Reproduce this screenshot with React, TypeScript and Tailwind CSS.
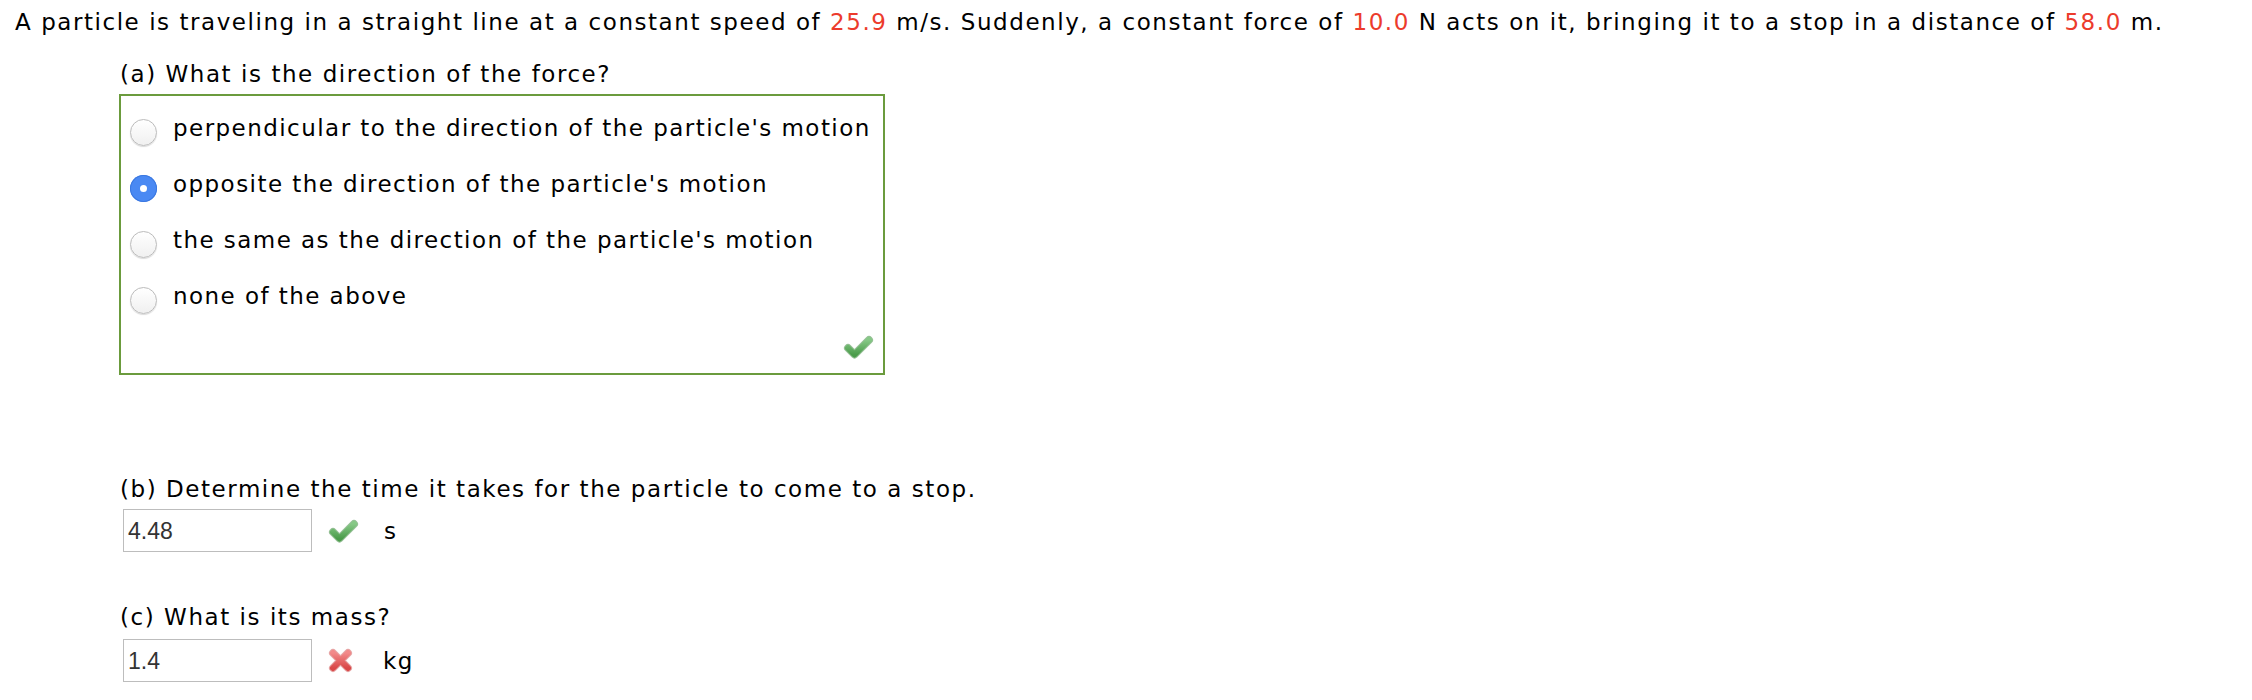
import React from "react";

const FONT = "font-['DejaVu_Sans',Verdana,sans-serif]";

function Check() {
  return (
    <svg width="31" height="26" viewBox="0 0 31 26">
      <defs>
        <linearGradient id="chk" x1="0" y1="0" x2="0" y2="1">
          <stop offset="0" stopColor="#86c886" />
          <stop offset="1" stopColor="#4b9c4b" />
        </linearGradient>
      </defs>
      <polyline
        points="5,14 11.5,20.5 26,6"
        fill="none"
        stroke="#3f8c3f"
        strokeWidth="8"
        strokeLinecap="round"
        strokeLinejoin="round"
        opacity="0.55"
      />
      <polyline
        points="5,14 11.5,20.5 26,6"
        fill="none"
        stroke="url(#chk)"
        strokeWidth="6"
        strokeLinecap="round"
        strokeLinejoin="round"
      />
    </svg>
  );
}

function Cross() {
  return (
    <svg width="25" height="25" viewBox="0 0 25 25">
      <defs>
        <linearGradient id="crs" x1="0" y1="0" x2="0" y2="1">
          <stop offset="0" stopColor="#f28a8a" />
          <stop offset="1" stopColor="#d94848" />
        </linearGradient>
      </defs>
      <g fill="none" strokeLinecap="round">
        <path d="M5 5 L20 20 M20 5 L5 20" stroke="#c83c3c" strokeWidth="8" opacity="0.45" />
        <path d="M5 5 L20 20 M20 5 L5 20" stroke="url(#crs)" strokeWidth="6" />
      </g>
    </svg>
  );
}

function Radio({ checked }: { checked: boolean }) {
  if (checked) {
    return (
      <span className="mt-[8px] flex h-[27px] w-[27px] shrink-0 items-center justify-center rounded-full bg-[#4a89f3] shadow-[inset_0_0_0_1px_#3b78e0]">
        <span className="h-[7px] w-[7px] rounded-full bg-white" />
      </span>
    );
  }
  return (
    <span className="mt-[8px] h-[27px] w-[27px] shrink-0 rounded-full border border-[#bcbcbc] bg-gradient-to-b from-white to-[#f0f0f0] shadow-[0_1px_1px_rgba(0,0,0,0.15)]" />
  );
}

const opciones = [
  { texto: "perpendicular to the direction of the particle's motion", marcado: false },
  { texto: "opposite the direction of the particle's motion", marcado: true },
  { texto: "the same as the direction of the particle's motion", marcado: false },
  { texto: "none of the above", marcado: false },
];

function Rojo({ children }: { children: React.ReactNode }) {
  return <span className="text-[#ec3b2c]">{children}</span>;
}

export default function App() {
  return (
    <div className={`${FONT} min-h-[700px] bg-white text-[23px] leading-[32px] tracking-[1.55px] text-black`}>
      <p className="pl-[15px] pt-[6px] whitespace-nowrap">
        A particle is traveling in a straight line at a constant speed of <Rojo>25.9</Rojo> m/s. Suddenly, a constant
        force of <Rojo>10.0</Rojo> N acts on it, bringing it to a stop in a distance of <Rojo>58.0</Rojo> m.
      </p>

      <div className="pl-[119px]">
        <p className="mt-[20px] pl-[1px]">(a) What is the direction of the force?</p>
        <div className="mt-[4px] w-[766px] border-2 border-[#6b9b3d] pt-[4px] tracking-[1.45px]">
          {opciones.map((o) => (
            <div key={o.texto} className="flex h-[56px] items-center pl-[9px]">
              <Radio checked={o.marcado} />
              <span className="ml-[16px] whitespace-nowrap">{o.texto}</span>
            </div>
          ))}
          <div className="mt-[10px] mb-[13px] flex justify-end pr-[9px]">
            <Check />
          </div>
        </div>

        <p className="mt-[98px] pl-[1px]">(b) Determine the time it takes for the particle to come to a stop.</p>
        <div className="mt-[4px] flex items-center pl-[4px]">
          <div className="flex h-[43px] w-[189px] items-center border border-[#bdbdbd] pl-[4px] font-['Liberation_Sans',Arial,sans-serif] text-[23px] tracking-normal text-[#333]">
            4.48
          </div>
          <div className="ml-[16px] w-[30px] pt-[1px]">
            <Check />
          </div>
          <span className="ml-[26px]">s</span>
        </div>

        <p className="mt-[49px] pl-[1px]">(c) What is its mass?</p>
        <div className="mt-[6px] flex items-center pl-[4px]">
          <div className="flex h-[43px] w-[189px] items-center border border-[#bdbdbd] pl-[4px] font-['Liberation_Sans',Arial,sans-serif] text-[23px] tracking-normal text-[#333]">
            1.4
          </div>
          <div className="ml-[16px] w-[30px]">
            <Cross />
          </div>
          <span className="ml-[25px]">kg</span>
        </div>
      </div>
    </div>
  );
}
